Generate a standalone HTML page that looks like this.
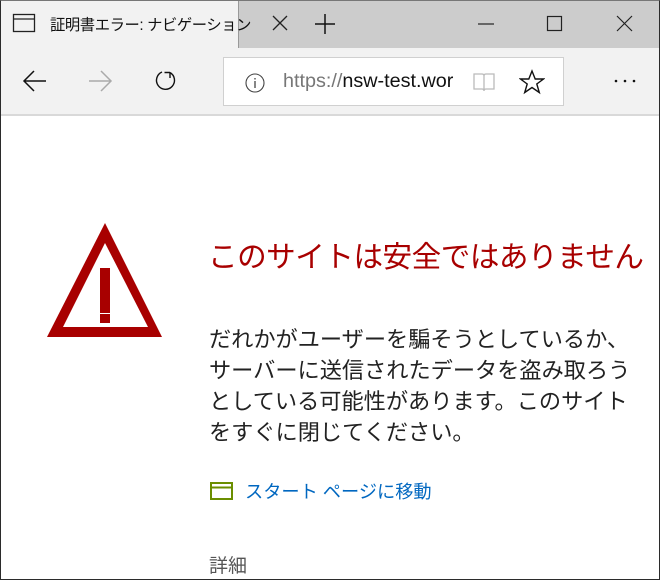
<!DOCTYPE html>
<html><head><meta charset="utf-8"><style>
*{margin:0;padding:0;box-sizing:border-box}
body{width:660px;height:580px;overflow:hidden;background:#fff;font-family:"Liberation Sans","Noto Sans CJK JP",sans-serif;position:relative}
.frame{position:absolute;inset:0;border:1px solid #2b2b2b;border-top-color:#777;pointer-events:none;z-index:9}
.tabbar{position:absolute;left:0;top:0;width:660px;height:48px;background:#cccccc}
.tab{position:absolute;left:0;top:0;width:239px;height:48px;background:#f2f2f2;border-right:1px solid #999}
.toolbar{position:absolute;left:0;top:48px;width:660px;height:68px;background:#f2f2f2;border-bottom:2px solid #d9d9d9}
.addr{position:absolute;left:223px;top:57px;width:341px;height:49px;background:#fff;border:1px solid #d0d0d0}
.t{position:absolute;white-space:nowrap}
</style></head><body>
<div class="tabbar"></div>
<div class="tab"></div>
<svg class="t" style="left:12px;top:13px" width="24" height="20"><rect x="1.5" y="1.5" width="21" height="17" fill="none" stroke="#222" stroke-width="1.3"/><line x1="1.5" y1="6" x2="22.5" y2="6" stroke="#222" stroke-width="1.3"/></svg>
<div class="t" style="left:50px;top:13px;font-size:15.3px;color:#111;letter-spacing:-0.4px">証明書エラー: ナビゲーション</div>
<svg class="t" style="left:271px;top:14px" width="18" height="18"><path d="M2 2L16 16M16 2L2 16" stroke="#222" stroke-width="1.3"/></svg>
<svg class="t" style="left:314px;top:13px" width="22" height="22"><path d="M11 1V21M1 11H21" stroke="#111" stroke-width="1.5"/></svg>
<svg class="t" style="left:476px;top:14px" width="20" height="20"><path d="M2 10H18" stroke="#222" stroke-width="1.2"/></svg>
<svg class="t" style="left:545px;top:14px" width="20" height="20"><rect x="2.5" y="2.5" width="14" height="14" fill="none" stroke="#222" stroke-width="1.2"/></svg>
<svg class="t" style="left:615px;top:14px" width="20" height="20"><path d="M2 2L17 17M17 2L2 17" stroke="#222" stroke-width="1.2"/></svg>
<div class="toolbar"></div>
<svg class="t" style="left:22px;top:70px" width="26" height="22"><path d="M2 11H24M12 1L2 11L12 21" fill="none" stroke="#111" stroke-width="1.5"/></svg>
<svg class="t" style="left:87px;top:70px" width="26" height="22"><path d="M2 11H24M14 1L24 11L14 21" fill="none" stroke="#aaa" stroke-width="1.5"/></svg>
<svg class="t" style="left:153px;top:68px" width="26" height="26"><path d="M9 4A9 9 0 1 0 17 4.5M17 4.5V10M17 4.5H11.5" fill="none" stroke="#111" stroke-width="1.4"/></svg>
<div class="addr"></div>
<svg class="t" style="left:244px;top:72px" width="22" height="22"><circle cx="11" cy="11" r="9" fill="none" stroke="#444" stroke-width="1.1"/><path d="M11 9V16M11 6V7.5" stroke="#444" stroke-width="1.3"/></svg>
<div class="t" style="left:283px;top:70px;font-size:19.8px;color:#777">https://<span style="color:#111">nsw-test.wor</span></div>
<svg class="t" style="left:472px;top:71px" width="24" height="22"><path d="M2 3H10Q12 3 12 5V20Q12 18 10 18H2ZM22 3H14Q12 3 12 5V20Q12 18 14 18H22Z" fill="none" stroke="#bbb" stroke-width="1.3"/></svg>
<svg class="t" style="left:519px;top:69px" width="26" height="26"><path d="M13 2L16.2 10H24.5L17.8 15L20.3 23.5L13 18.5L5.7 23.5L8.2 15L1.5 10H9.8Z" fill="none" stroke="#111" stroke-width="1.4"/></svg>
<svg class="t" style="left:613px;top:78px" width="26" height="6"><circle cx="3" cy="3" r="1.3" fill="#111"/><circle cx="12" cy="3" r="1.3" fill="#111"/><circle cx="21" cy="3" r="1.3" fill="#111"/></svg>
<svg class="t" style="left:40px;top:215px" width="130" height="130"><path d="M65 8L122 122H7Z" fill="#a80000"/><path d="M65 28L108 112H23Z" fill="#fff"/><rect x="60" y="53" width="10" height="45" fill="#a80000"/><rect x="60" y="99" width="10" height="9" fill="#a80000"/></svg>
<div class="t" style="left:208px;top:233px;font-size:29.6px;color:#a80000;letter-spacing:-0.5px">このサイトは安全ではありません</div>
<div class="t" style="left:209px;top:324px;font-size:22.2px;line-height:31px;color:#222">だれかがユーザーを騙そうとしているか、<br>サーバーに送信されたデータを盗み取ろう<br>としている可能性があります。このサイト<br>をすぐに閉じてください。</div>
<svg class="t" style="left:210px;top:482px" width="24" height="19"><rect x="1" y="1" width="21" height="16" fill="none" stroke="#6b8e00" stroke-width="2"/><line x1="1" y1="5.5" x2="22" y2="5.5" stroke="#6b8e00" stroke-width="2"/></svg>
<div class="t" style="left:245px;top:478px;font-size:18.2px;color:#0067c0">スタート ページに移動</div>
<div class="t" style="left:209px;top:551px;font-size:19px;color:#555">詳細</div>
<div class="frame"></div>
</body></html>
